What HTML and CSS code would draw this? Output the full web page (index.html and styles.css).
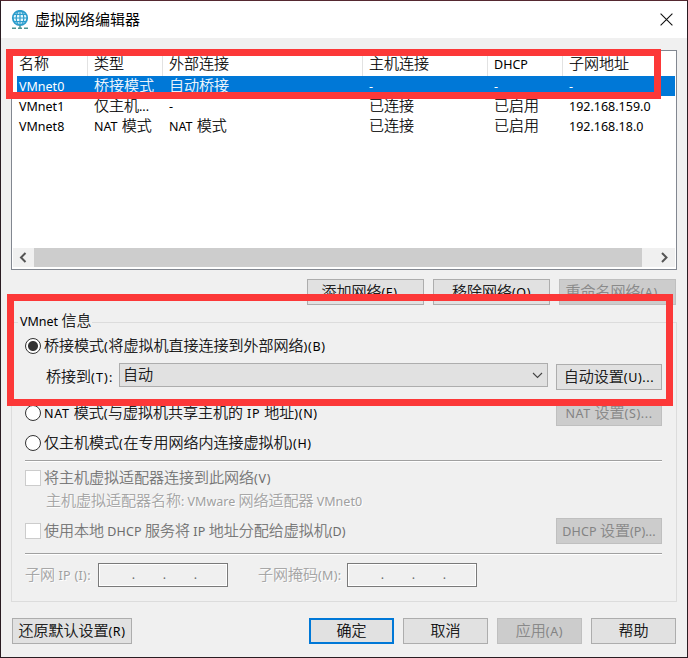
FILE: index.html
```html
<!DOCTYPE html>
<html lang="zh-CN">
<head>
<meta charset="utf-8">
<title>虚拟网络编辑器</title>
<link rel="stylesheet" href="styles.css">
</head>
<body>
<div class="window">
  <header class="titlebar">
    <svg class="app-icon" width="18" height="20" viewBox="0 0 18 20" fill="none">
      <circle cx="9" cy="8" r="7.2" fill="#e9f8fd" stroke="#2c9dcc" stroke-width="1.8"/>
      <path d="M9 1v14M2 8h14M3 4.4h12M3 11.6h12" stroke="#2c9dcc" stroke-width="1.2"/>
      <ellipse cx="9" cy="8" rx="3.8" ry="7" stroke="#2c9dcc" stroke-width="1.2"/>
      <path d="M1 18.2h4M7 18.2h4M13 18.2h4M9 15.5v2.5" stroke="#4c948f" stroke-width="1.5"/>
    </svg>
    <h1 class="title">虚拟网络编辑器</h1>
    <svg class="close" width="13" height="13" viewBox="0 0 13 13"><path d="M.6.6l11.8 11.8M12.4.6L.6 12.4" stroke="#111" stroke-width="1.1"/></svg>
  </header>
  <main class="content">
    <section class="list">
      <div class="row head"><span>名称</span><span>类型</span><span>外部连接</span><span>主机连接</span><span><b>DHCP</b></span><span>子网地址</span></div>
      <div class="row selected"><span><b>VMnet0</b></span><span>桥接模式</span><span>自动桥接</span><span><b>-</b></span><span><b>-</b></span><span><b>-</b></span></div>
      <div class="row"><span><b>VMnet1</b></span><span>仅主机<b>...</b></span><span><b>-</b></span><span>已连接</span><span>已启用</span><span><b>192.168.159.0</b></span></div>
      <div class="row"><span><b>VMnet8</b></span><span><b>NAT </b>模式</span><span><b>NAT </b>模式</span><span>已连接</span><span>已启用</span><span><b>192.168.18.0</b></span></div>
      <div class="scrollbar">
        <svg width="21" height="19" viewBox="0 0 21 19"><path d="M12.5 5L8 9.5l4.5 4.5" fill="none" stroke="#555" stroke-width="2"/></svg>
        <div class="thumb"></div>
        <svg width="33" height="19" viewBox="0 0 33 19"><path d="M20 5l4.500 4.500L20 14" fill="none" stroke="#555" stroke-width="2"/></svg>
      </div>
    </section>
    <div class="list-actions">
      <button class="btn">添加网络<b>(E)...</b></button>
      <button class="btn">移除网络<b>(O)</b></button>
      <button class="btn" disabled>重命名网络<b>(A)...</b></button>
    </div>
    <section class="group">
      <h2 class="legend"><b>VMnet </b>信息</h2>
      <div class="line bridge"><i class="radio on"></i><label>桥接模式<b>(</b>将虚拟机直接连接到外部网络<b>)(B)</b></label></div>
      <div class="line target">
        <label>桥接到<b>(T):</b></label>
        <div class="select"><span>自动</span><svg width="11" height="7" viewBox="0 0 11 7"><path d="M1 1l4.500 4.500L10 1" fill="none" stroke="#444" stroke-width="1.100"/></svg></div>
        <button class="btn wide">自动设置<b>(U)...</b></button>
      </div>
      <div class="line nat"><i class="radio"></i><label><b>NAT </b>模式<b>(</b>与虚拟机共享主机的<b> IP </b>地址<b>)(N)</b></label><button class="btn wide" disabled><b>NAT </b>设置<b>(S)...</b></button></div>
      <div class="line host"><i class="radio"></i><label>仅主机模式<b>(</b>在专用网络内连接虚拟机<b>)(H)</b></label></div>
      <hr>
      <div class="line adapter off"><i class="check"></i><label>将主机虚拟适配器连接到此网络<b>(V)</b></label></div>
      <p class="adapter-name etched">主机虚拟适配器名称<b>: VMware </b>网络适配器<b> VMnet0</b></p>
      <div class="line dhcp off"><i class="check"></i><label>使用本地<b> DHCP </b>服务将<b> IP </b>地址分配给虚拟机<b>(D)</b></label><button class="btn wide" disabled><b>DHCP </b>设置<b>(P)...</b></button></div>
      <hr>
      <div class="subnet">
        <label class="etched ip-label">子网<b> IP (I):</b></label>
        <div class="ip"><b>.</b><b>.</b><b>.</b></div>
        <label class="etched mask-label">子网掩码<b>(M):</b></label>
        <div class="ip"><b>.</b><b>.</b><b>.</b></div>
      </div>
    </section>
    <footer class="footer">
      <button class="btn reset">还原默认设置<b>(R)</b></button>
      <button class="btn primary">确定</button>
      <button class="btn">取消</button>
      <button class="btn" disabled>应用<b>(A)</b></button>
      <button class="btn">帮助</button>
    </footer>
  </main>
  <div class="mark mark-list"></div>
  <div class="mark mark-bridge"></div>
</div>
</body>
</html>
```

FILE: styles.css
```css
* { box-sizing: border-box; }
body { margin: 0; }
.window {
  position: relative;
  width: 688px;
  height: 658px;
  border: 1px solid #2a1c22;
  border-top-color: #552830;
  background: #f0f0f0;
  color: #000;
  font: 300 15px/20px "Noto Sans CJK SC", sans-serif;
  -webkit-text-stroke: .2px;
  white-space: nowrap;
  overflow: hidden;
}
/* Latin runs sit one step smaller than the Chinese text */
b { font: 400 12.5px/1 "Noto Sans", sans-serif; -webkit-text-stroke: 0; white-space: pre; }
h1, h2, p { margin: 0; font-size: 15px; font-weight: inherit; }

.titlebar { display: flex; align-items: center; height: 37px; padding: 0 14px 0 10px; background: #fff; }
.app-icon { margin-right: 6px; }
.title { flex: 1; margin-top: -2px; font-weight: 400; -webkit-text-stroke: 0; }
.content { padding: 12px 10px 0; }

.list { display: flex; flex-direction: column; width: 666px; height: 220px; padding: 1px 1px 2px; border: 1px solid #828790; background: #fff; }
.row { display: grid; grid-template-columns: 75px 75px 200px 125px 75px 1fr; height: 20px; margin-left: 4px; line-height: 18px; }
.row span { padding-left: 2px; }
.row b { word-spacing: 1px; }
.head { height: 24px; margin-left: 0; line-height: 22px; }
.head span { padding-left: 6px; border-right: 1px solid #e2e2e2; }
.head span:last-child { border: 0; }
.selected { background: #0078d7; color: #fff; }
.scrollbar { display: flex; height: 19px; margin-top: auto; background: #f0f0f0; }
.thumb { flex: 1; background: #cdcdcd; }

.btn {
  width: 85px; height: 26px; padding: 0 0 2px;
  border: 1px solid #adadad; border-radius: 0;
  background: #e1e1e1; color: #000;
  font: inherit; line-height: 20px; text-align: center; white-space: nowrap;
}
.btn b { letter-spacing: .6px; }
.btn:disabled { border-color: #bfbfbf; background: #ccc; color: #838383; }
.btn.primary { border: 2px solid #0078d7; }
.btn.wide { width: 106px; margin-left: auto; }
.list-actions { display: flex; justify-content: flex-end; gap: 9px; margin-top: 9px; width: 665px; }
.list-actions .btn { width: 117px; }

.group { width: 666px; height: 280px; margin-top: 17px; padding: 0 14px 0 13px; border: 1px solid #dcdcdc; }
.legend { width: 74px; height: 20px; margin: -12px 0 0 -7px; padding-left: 2px; background: #f0f0f0; line-height: 18px; }
.line { display: flex; align-items: center; height: 26px; }
.line label, .subnet label { margin-top: -2px; }
.line label b { letter-spacing: .7px; }
.bridge { margin-top: 2px; }
.target { margin-top: 4px; height: 28px; }
.target > label { width: 73px; margin-left: 21px; }
.target > label b { letter-spacing: 1.2px; }
.select { display: flex; align-items: center; justify-content: space-between; width: 429px; height: 24px; margin-top: -4px; padding: 0 4px 0 3px; border: 1px solid #adadad; background: #e1e1e1; }
.select span { margin-top: -3px; }
.nat { margin-top: 9px; }
.host { margin-top: 4px; }
.radio, .check { flex: none; width: 16px; height: 16px; margin-right: 3px; border: 1px solid #333; background: #fff; }
.radio { border-radius: 50%; }
.radio.on { background: radial-gradient(circle, #333 4.500px, #fff 5.500px); }
.check { border-color: #ccc; }
hr { width: 637px; height: 2px; margin: 4px 0 0; border: 0; border-top: 1px solid #a0a0a0; background: #fff; }
.off label { color: #6d6d6d; }
.etched { color: #a0a0a0; text-shadow: 1px 1px 0 #fff; }
.adapter { margin-top: 3px; }
.adapter-name { height: 20px; margin: 0 0 7px 21px; line-height: 18px; }
.dhcp label b, .dhcp .btn b { letter-spacing: .1px; }
.dhcp + hr { margin-top: 9px; }
.subnet { display: flex; align-items: center; height: 24px; margin-top: 8px; }
.subnet label b { letter-spacing: .3px; }
.ip-label { width: 73px; }
.mask-label { width: 89px; margin-left: 30px; }
.ip { display: flex; justify-content: center; gap: 27.600px; width: 130px; height: 24px; padding-left: 3px; border: 1px solid #7a7a7a; box-shadow: inset 0 0 0 1px #fff; color: #6d6d6d; }
.ip b { line-height: 22px; }

.footer { display: flex; gap: 9px; width: 665px; margin-top: 16px; padding-left: 1px; }
.footer .reset { width: 120px; margin-right: auto; }

/* red emphasis frames laid over the dialog */
.mark { position: absolute; border: 7px solid #fc3838; pointer-events: none; }
.mark-list { left: 5px; top: 48px; width: 655px; height: 50px; }
.mark-bridge { left: 6px; top: 293px; width: 666px; height: 112px; }
```
